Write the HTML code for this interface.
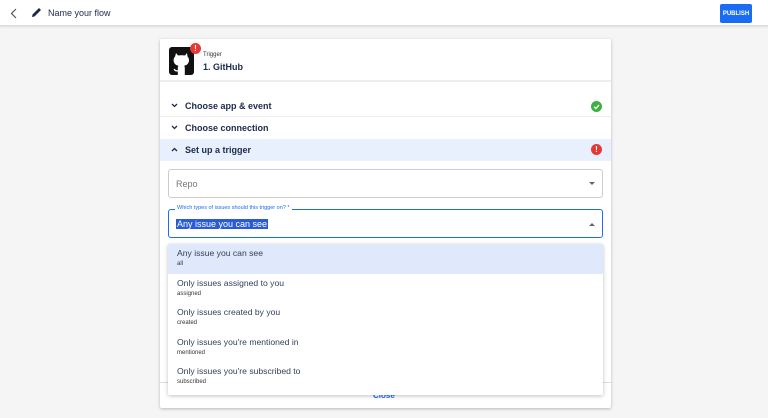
<!DOCTYPE html>
<html><head><style>
*{box-sizing:border-box;margin:0;padding:0}
body{width:768px;height:418px;overflow:hidden;background:#f5f5f5;font-family:"Liberation Sans",sans-serif;position:relative;color:#1c2a4a}
.top{position:absolute;left:0;top:0;width:768px;height:26px;background:#fff;border-bottom:1px solid #ddd;box-shadow:0 1px 2px rgba(0,0,0,.1)}
.pub{position:absolute;left:720px;top:4px;width:32px;height:19px;background:#1a6cf5;color:#fff;font-size:6px;font-weight:bold;display:flex;align-items:center;justify-content:center;border-radius:2px}
.card{position:absolute;left:160px;top:39px;width:451px;height:369px;background:#fff;border-radius:2px;box-shadow:0 1px 3px rgba(0,0,0,.25)}
.row{position:absolute;left:0;width:451px;height:22px;font-size:9px;font-weight:bold;line-height:22px;padding-left:25px}
.row svg.ch{position:absolute;left:11px;top:8px}
.field{position:absolute;left:8px;width:435px;height:29px;border:1px solid #ccc;border-radius:3px;font-size:9px}
.dd{position:absolute;left:168px;top:244px;width:435px;height:151px;background:#fff;box-shadow:0 1px 4px rgba(0,0,0,.25);border-radius:2px}
.it{height:29.5px;padding:4px 9px 0;font-size:8.6px;color:#33405a}
.it small{display:block;font-size:6px;margin-top:3px;color:#333}
</style></head><body>
<div class="top">
<svg style="position:absolute;left:10px;top:8px" width="7" height="11" viewBox="0 0 7 11"><path d="M6 1L1.5 5.5 6 10" fill="none" stroke="#555" stroke-width="1.2"/></svg>
<svg style="position:absolute;left:31px;top:7px" width="11" height="11" viewBox="0 0 11 11"><path d="M1 10l.5-2.5L8 1l2 2-6.5 6.5z" fill="#1c2a4a"/></svg>
<div style="position:absolute;left:48px;top:8px;font-size:9px;color:#1c2a4a">Name your flow</div>
<div class="pub">PUBLISH</div>
</div>
<div class="card">
<div style="position:absolute;left:0;top:0;width:451px;height:43px;border-bottom:2px solid #eee"></div>
<svg style="position:absolute;left:9px;top:8px" width="25" height="28" viewBox="0 0 25 28"><rect width="25" height="28" rx="3" fill="#111"/><path d="M7 6l2 2.5c1.2-.4 5.8-.4 7 0L18 6l.5 3.5c1 1 1.5 2.3 1.5 3.7 0 3-2 5-5 5.6.6.5.8 1.3.8 2.2V28h-7v-3.5c-2 .3-3.5-.5-4.3-2.3l1.2-.4c.8 1.4 1.8 1.6 3.1 1.3v-2.1c0-.9.2-1.7.8-2.2-3-.6-5-2.6-5-5.6 0-1.4.5-2.7 1.5-3.7z" fill="#fff"/></svg>
<div style="position:absolute;left:30px;top:4px;width:11px;height:11px;border-radius:50%;background:#e53935;color:#fff;font-size:8px;font-weight:bold;text-align:center;line-height:11px">!</div>
<div style="position:absolute;left:43px;top:13px;font-size:6px;color:#333">Trigger</div>
<div style="position:absolute;left:43px;top:23px;font-size:9px;font-weight:bold">1. GitHub</div>
<div class="row" style="top:56px;border-bottom:1px solid #eee"><svg class="ch" width="7" height="5" viewBox="0 0 7 5"><path d="M1 1l2.5 2.5L6 1" fill="none" stroke="#1c2a4a" stroke-width="1.3"/></svg>Choose app &amp; event
<svg style="position:absolute;left:431px;top:6px" width="11" height="11" viewBox="0 0 11 11"><circle cx="5.5" cy="5.5" r="5.5" fill="#3cb043"/><path d="M3 5.7l1.8 1.8L8 4" fill="none" stroke="#fff" stroke-width="1.3"/></svg></div>
<div class="row" style="top:78px"><svg class="ch" width="7" height="5" viewBox="0 0 7 5"><path d="M1 1l2.5 2.5L6 1" fill="none" stroke="#1c2a4a" stroke-width="1.3"/></svg>Choose connection</div>
<div class="row" style="top:100px;background:#e8f0fe"><svg class="ch" width="7" height="5" viewBox="0 0 7 5"><path d="M1 4l2.5-2.5L6 4" fill="none" stroke="#1c2a4a" stroke-width="1.3"/></svg>Set up a trigger
<div style="position:absolute;left:431px;top:5px;width:11px;height:11px;border-radius:50%;background:#e53935;color:#fff;font-size:8px;text-align:center;line-height:11px">!</div></div>
<div class="field" style="top:130px;color:#777;padding:9px 7px">Repo<span style="position:absolute;right:7px;top:12px;border:3px solid transparent;border-top:3px solid #666"></span></div>
<div class="field" style="top:170px;border-color:#1a6cf5">
<div style="position:absolute;left:6px;top:-5px;background:#fff;padding:0 2px;font-size:5.5px;color:#1a6cf5">Which types of issues should this trigger on? *</div>
<span style="position:absolute;left:7px;top:9px;background:#2a5bd7;color:#fff;font-size:9px;padding:0 1px">Any issue you can see</span>
<span style="position:absolute;right:7px;top:10px;border:3px solid transparent;border-bottom:3px solid #666"></span></div>
<div style="position:absolute;left:0;top:343px;width:451px;border-top:1px solid #ddd"></div>
<div style="position:absolute;left:213px;top:352px;font-size:8px;font-weight:bold;color:#1a6cf5">Close</div>
</div>
<div class="dd">
<div class="it" style="background:#dfe9fb">Any issue you can see<small>all</small></div>
<div class="it">Only issues assigned to you<small>assigned</small></div>
<div class="it">Only issues created by you<small>created</small></div>
<div class="it">Only issues you're mentioned in<small>mentioned</small></div>
<div class="it">Only issues you're subscribed to<small>subscribed</small></div>
</div>
</body></html>
